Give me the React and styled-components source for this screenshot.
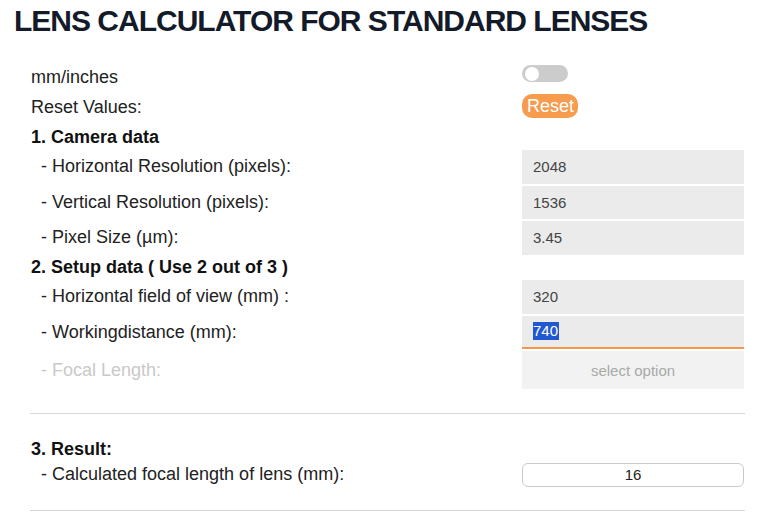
import React from "react";
import styled, { createGlobalStyle } from "styled-components";

const Global = createGlobalStyle`
  html, body { margin: 0; padding: 0; background: #fff; }
  body { font-family: "Liberation Sans", Arial, sans-serif; color: #222; }
`;

const Page = styled.div`
  width: 780px;
  padding-top: 3px;
`;

const Title = styled.h1`
  margin: 0 0 0 14px;
  height: 36px;
  font-size: 30px;
  line-height: 36px;
  font-weight: 700;
  letter-spacing: -1px;
  color: #131a29;
  white-space: nowrap;
`;

const Form = styled.div`
  margin: 23px 0 0 30px;
  width: 715px;
`;

const Row = styled.div`
  display: grid;
  grid-template-columns: 1fr 222px;
  padding-right: 1px;
  height: ${(p) => p.$h}px;
  align-items: ${(p) => (p.$top ? "start" : "center")};
`;

const Label = styled.div`
  font-size: 18px;
  line-height: ${(p) => p.$lh || 20}px;
  padding-left: ${(p) => (p.$sub ? 11 : 1)}px;
  color: ${(p) => (p.$muted ? "#c9c9c9" : "#222")};
  white-space: nowrap;
`;

const Heading = styled.div`
  font-size: 18px;
  font-weight: 700;
  line-height: ${(p) => p.$lh}px;
  height: ${(p) => p.$h}px;
  padding-left: 1px;
  color: #111;
`;

const Toggle = styled.div`
  margin-top: 3px;
  width: 46px;
  height: 17px;
  border-radius: 9px;
  background: #cccccc;
  display: flex;
  align-items: center;
  padding-left: 3px;
  box-sizing: border-box;
`;

const Knob = styled.span`
  width: 14px;
  height: 14px;
  border-radius: 50%;
  background: #fff;
`;

const ResetButton = styled.button`
  margin-top: 2px;
  justify-self: start;
  height: 24px;
  padding: 0 4px 0 5px;
  border: 0;
  border-radius: 10px;
  background: #f79b4f;
  color: #fff;
  font-family: "Liberation Sans", Arial, sans-serif;
  font-size: 18px;
  line-height: 24px;
  cursor: pointer;
`;

const Field = styled.div`
  box-sizing: border-box;
  height: ${(p) => p.$h || 33.5}px;
  background: ${(p) => (p.$light ? "#f2f2f2" : "#ebebeb")};
  border-bottom: ${(p) => (p.$focus ? "2px solid #f7964a" : "none")};
  display: flex;
  align-items: center;
  justify-content: ${(p) => (p.$center ? "center" : "flex-start")};
  padding-left: ${(p) => (p.$center ? 0 : 11)}px;
  font-size: 15px;
  color: ${(p) => (p.$light ? "#a9a9a9" : "#444")};
`;

const Selected = styled.span`
  background: #2158d1;
  color: #fff;
  line-height: 18px;
  padding: 0 1px 0 0;
`;

const Rule = styled.hr`
  margin: 0;
  border: 0;
  border-top: 1px solid #d6d6d6;
  height: 0;
`;

const ResultField = styled.div`
  box-sizing: border-box;
  height: 24px;
  border: 1px solid #c9c9c9;
  border-radius: 6px;
  background: #fff;
  display: flex;
  align-items: center;
  justify-content: center;
  font-size: 15px;
  color: #222;
`;

const Spacer = styled.div`
  height: ${(p) => p.$h}px;
`;

const camera = [
  ["- Horizontal Resolution (pixels):", "2048"],
  ["- Vertical Resolution (pixels):", "1536"],
  ["- Pixel Size (µm):", "3.45"],
];

export default function App() {
  return (
    <Page>
      <Global />
      <Title>LENS CALCULATOR FOR STANDARD LENSES</Title>
      <Form>
        <Row $h={30} $top>
          <Label $lh={30}>mm/inches</Label>
          <Toggle>
            <Knob />
          </Toggle>
        </Row>
        <Row $h={32} $top>
          <Label $lh={30}>Reset Values:</Label>
          <ResetButton>Reset</ResetButton>
        </Row>
        <Heading $h={26} $lh={26}>1. Camera data</Heading>
        {camera.map(([l, v]) => (
          <Row key={l} $h={35.5} $top>
            <Label $sub $lh={33.5}>{l}</Label>
            <Field>{v}</Field>
          </Row>
        ))}
        <Heading $h={23.5} $lh={20}>2. Setup data ( Use 2 out of 3 )</Heading>
        <Row $h={35.5} $top>
          <Label $sub $lh={33.5}>- Horizontal field of view (mm) :</Label>
          <Field>320</Field>
        </Row>
        <Row $h={35.5} $top>
          <Label $sub $lh={33.5}>- Workingdistance (mm):</Label>
          <Field $focus>
            <Selected>740</Selected>
          </Field>
        </Row>
        <Row $h={38} $top>
          <Label $sub $muted $lh={38}>- Focal Length:</Label>
          <Field $light $center $h={38}>select option</Field>
        </Row>
        <Spacer $h={24} />
        <Rule />
        <Spacer $h={24.5} />
        <Heading $h={24} $lh={20}>3. Result:</Heading>
        <Row $h={24} $top>
          <Label $sub $lh={22}>- Calculated focal length of lens (mm):</Label>
          <ResultField>16</ResultField>
        </Row>
        <Spacer $h={23} />
        <Rule />
      </Form>
    </Page>
  );
}
